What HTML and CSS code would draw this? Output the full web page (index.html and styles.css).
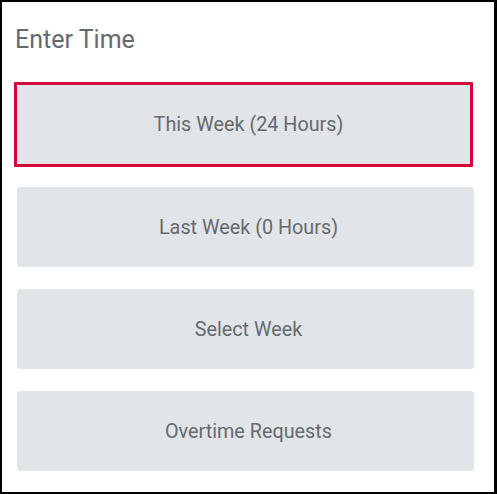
FILE: index.html
```html
<!DOCTYPE html>
<html>
<head>
<meta charset="utf-8">
<link rel="stylesheet" href="styles.css">
</head>
<body>
<div class="frame">
  <h1 class="title">Enter Time</h1>
  <div class="list">
    <div class="btn btn-selected">This Week (24 Hours)</div>
    <div class="btn">Last Week (0 Hours)</div>
    <div class="btn">Select Week</div>
    <div class="btn">Overtime Requests</div>
  </div>
</div>
</body>
</html>
```
FILE: styles.css
```css
html, body {
  margin: 0;
  padding: 0;
  background: #ffffff;
}
.frame {
  box-sizing: border-box;
  width: 497px;
  height: 494px;
  border-style: solid;
  border-color: #000000;
  border-width: 2px 3px 2px 2px;
  padding: 23px 0 0 0;
  font-family: Roboto, "Liberation Sans", sans-serif;
}
.title {
  margin: 0 0 27px 13px;
  font-size: 25px;
  line-height: 30px;
  font-weight: 400;
  color: #66696e;
}
.list {
  display: flex;
  flex-direction: column;
  gap: 22px;
  padding-left: 15px;
}
.btn {
  box-sizing: border-box;
  width: 457px;
  height: 80px;
  padding-left: 6px;
  display: flex;
  align-items: center;
  justify-content: center;
  background: #e1e5e8;
  border: 1px solid #e4e7ea;
  border-radius: 3px;
  color: #66696e;
  font-size: 19.8px;
}
.btn-selected {
  width: 459px;
  height: 85px;
  margin-left: -3px;
  margin-bottom: -2px;
  padding-left: 10px;
  border: 3px solid #d3073c;
  border-radius: 1px;
}
```
